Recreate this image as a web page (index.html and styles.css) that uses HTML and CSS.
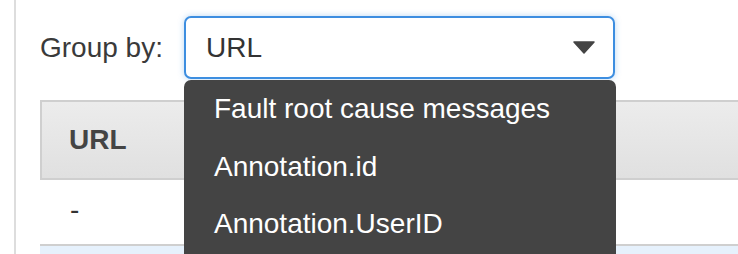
FILE: index.html
```html
<!DOCTYPE html>
<html lang="en">
<head>
  <meta charset="UTF-8" />
  <meta name="viewport" content="width=device-width, initial-scale=1.0" />
  <title>Traces - Group by</title>
  <link rel="stylesheet" href="styles.css">
</head>
<body>
  <div class="panel">
    <div class="group-by">
      <label class="group-label" for="groupSelect">Group by:</label>
      <div class="select-wrap">
        <div class="select" id="groupSelect">
          <span class="select-value">URL</span>
          <svg class="caret" width="22" height="13" viewBox="0 0 22 13">
            <polygon points="1,1 21,1 11,12" fill="#444" stroke="#444" stroke-width="1.5" stroke-linejoin="round" />
          </svg>
        </div>
        <ul class="menu">
          <li>Fault root cause messages</li>
          <li>Annotation.id</li>
          <li>Annotation.UserID</li>
        </ul>
      </div>
    </div>

    <table class="traces">
      <thead>
        <tr><th>URL</th></tr>
      </thead>
      <tbody>
        <tr><td>-</td></tr>
        <tr class="selected"><td>&nbsp;</td></tr>
      </tbody>
    </table>
  </div>
</body>
</html>
```

FILE: styles.css
```css
html, body {
  margin: 0;
  padding: 0;
  height: 100%;
  overflow: hidden;
  background-color: #fff;
}
body {
  font-family: "Liberation Sans", Arial, sans-serif;
  font-size: 28px;
  color: #333;
}
.panel {
  margin-left: 14px;
  border-left: 2px solid #ddd;
  padding: 16px 0 0 24px;
  min-height: 300px;
}
.group-by {
  display: flex;
  align-items: center;
}
.group-label {
  margin-right: 21px;
  color: #3a3a3a;
}
.select-wrap {
  position: relative;
}
.select {
  box-sizing: border-box;
  width: 431px;
  height: 63px;
  display: flex;
  align-items: center;
  justify-content: space-between;
  padding: 0 18px 0 20px;
  border: 2px solid #3d8ee0;
  border-radius: 7px;
  box-shadow: 0 0 6px rgba(61, 142, 224, 0.35);
  background-color: #fff;
}
.select-value {
  color: #333;
}
.caret {
  display: block;
}
.menu {
  position: absolute;
  top: 64px;
  left: 0;
  width: 432px;
  margin: 0;
  padding: 0 0 24px 0;
  list-style: none;
  background-color: #444;
  border-radius: 7px 7px 0 0;
  z-index: 10;
}
.menu li {
  line-height: 57.5px;
  padding-left: 30px;
  color: #fff;
}
.traces {
  width: 100%;
  margin-top: 21px;
  border-collapse: separate;
  border-spacing: 0;
}
.traces th {
  text-align: left;
  font-weight: bold;
  color: #444;
  line-height: 76px;
  padding: 0 0 0 27px;
  border-top: 2px solid #cfcfcf;
  border-left: 2px solid #cfcfcf;
  border-bottom: 2px solid #cfcfcf;
  background: linear-gradient(#ececec, #e0e0e0);
}
.traces td {
  line-height: 59px;
  padding: 0 0 5px 30px;
  border-bottom: 2px solid #cfcfcf;
  color: #333;
}
.traces tr.selected td {
  background-color: #e6f1fc;
  border-bottom: none;
}
```
